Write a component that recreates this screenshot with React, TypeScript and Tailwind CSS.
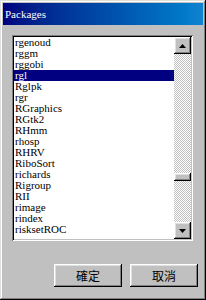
const packages = [
  "rgenoud",
  "rggm",
  "rggobi",
  "rgl",
  "Rglpk",
  "rgr",
  "RGraphics",
  "RGtk2",
  "RHmm",
  "rhosp",
  "RHRV",
  "RiboSort",
  "richards",
  "Rigroup",
  "RII",
  "rimage",
  "rindex",
  "risksetROC",
];

const raised =
  "shadow-[inset_-1px_-1px_#000000,inset_1px_1px_#ffffff,inset_-2px_-2px_#808080,inset_2px_2px_#dfdfdf]";

function Arrow({ up }: { up?: boolean }) {
  return (
    <svg width="7" height="4" viewBox="0 0 7 4">
      {up ? <path d="M3.5 0 L7 4 L0 4 Z" fill="#000" /> : <path d="M0 0 L7 0 L3.5 4 Z" fill="#000" />}
    </svg>
  );
}

export default function App() {
  const selected = "rgl";

  return (
    <div
      className="w-[206px] h-[300px] bg-[#c0c0c0] p-[3px] flex flex-col shadow-[inset_-1px_-1px_#000000,inset_1px_1px_#dfdfdf,inset_-2px_-2px_#808080,inset_2px_2px_#ffffff]"
      style={{ fontFamily: '"Liberation Serif", serif' }}
    >
      <div className="h-[22px] bg-linear-to-r from-[#000080] to-[#1084d0] flex items-center px-[2px]">
        <span className="text-white text-[11px] leading-none">Packages</span>
      </div>

      <div className="pl-[9px] pt-[10px]">
        <div className="w-[181px] h-[206px] bg-white p-[2px] flex shadow-[inset_1px_1px_#808080,inset_-1px_-1px_#ffffff,inset_2px_2px_#000000,inset_-2px_-2px_#c0c0c0]">
          <div className="flex-1 flex flex-col overflow-hidden">
            {packages.map((p) => (
              <div
                key={p}
                className={
                  p === selected
                    ? "h-[11px] leading-[11px] text-[11px] pl-[1px] bg-[#000080] text-white"
                    : "h-[11px] leading-[11px] text-[11px] pl-[1px] text-black"
                }
              >
                {p}
              </div>
            ))}
          </div>

          <div className="w-[17px] flex flex-col bg-[repeating-conic-gradient(#c0c0c0_0%_25%,#ffffff_0%_50%)] bg-[length:2px_2px]">
            <div className={`h-[17px] bg-[#c0c0c0] flex items-center justify-center ${raised}`}>
              <Arrow up />
            </div>
            <div className="flex-1 flex flex-col">
              <div className="h-[119px]" />
              <div className={`h-[8px] bg-[#c0c0c0] ${raised}`} />
            </div>
            <div className={`h-[17px] bg-[#c0c0c0] flex items-center justify-center ${raised}`}>
              <Arrow />
            </div>
          </div>
        </div>
      </div>

      <div className="flex justify-end gap-[8px] pr-[5px] mt-[23px]">
        {["確定", "取消"].map((t) => (
          <button
            key={t}
            className={`w-[68px] h-[23px] bg-[#c0c0c0] text-[12px] text-black flex items-center justify-center ${raised}`}
            style={{ fontFamily: '"Noto Sans CJK TC", sans-serif' }}
          >
            {t}
          </button>
        ))}
      </div>
    </div>
  );
}
